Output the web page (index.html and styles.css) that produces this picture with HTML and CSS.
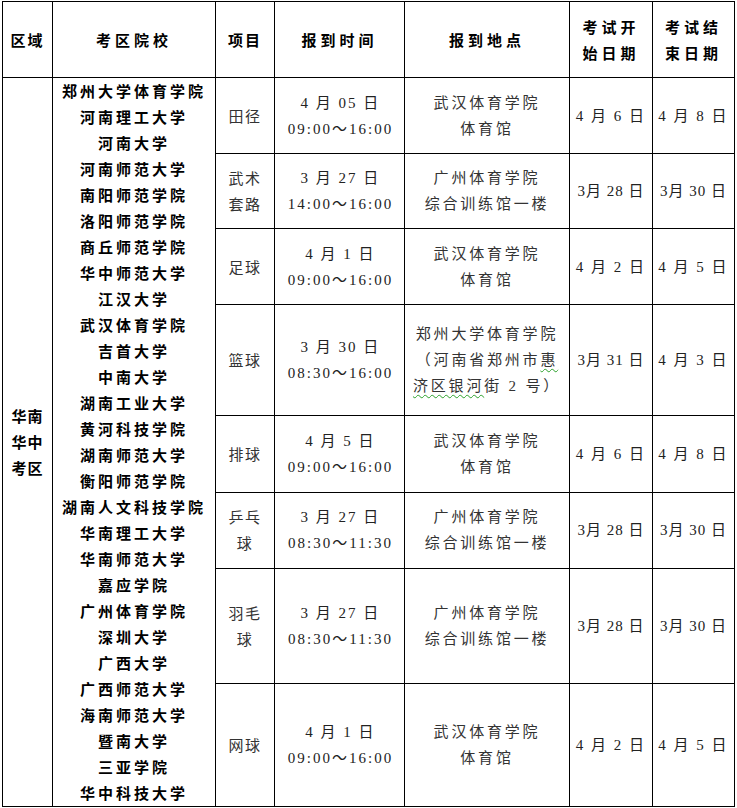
FILE: index.html
```html
<!DOCTYPE html>
<html lang="zh-CN">
<head>
<meta charset="utf-8">
<title>考区安排</title>
<link rel="stylesheet" href="styles.css">
</head>
<body>
<table class="sched">
  <colgroup>
    <col class="w-region"><col class="w-school"><col class="w-proj"><col class="w-time"><col class="w-addr"><col class="w-date"><col class="w-date2">
  </colgroup>
  <thead>
    <tr class="r-head">
      <th class="hd hd-tight">区域</th>
      <th class="hd">考区院校</th>
      <th class="hd hd-tight">项目</th>
      <th class="hd">报到时间</th>
      <th class="hd">报到地点</th>
      <th class="hd">考试开<br>始日期</th>
      <th class="hd">考试结<br>束日期</th>
    </tr>
  </thead>
  <tbody>
    <tr class="r-76">
      <td class="region" rowspan="8">华南<br>华中<br>考区</td>
      <td class="schools" rowspan="8">
        郑州大学体育学院<br>河南理工大学<br>河南大学<br>河南师范大学<br>南阳师范学院<br>洛阳师范学院<br>商丘师范学院<br>华中师范大学<br>江汉大学<br>武汉体育学院<br>吉首大学<br>中南大学<br>湖南工业大学<br>黄河科技学院<br>湖南师范大学<br>衡阳师范学院<br>湖南人文科技学院<br>华南理工大学<br>华南师范大学<br>嘉应学院<br>广州体育学院<br>深圳大学<br>广西大学<br>广西师范大学<br>海南师范大学<br>暨南大学<br>三亚学院<br>华中科技大学
      </td>
      <td class="proj">田径</td>
      <td class="time"><div class="day">4 月 05 日</div><div class="clock">09:00～16:00</div></td>
      <td class="addr">武汉体育学院<br>体育馆</td>
      <td class="date">4 月 6 日</td>
      <td class="date">4 月 8 日</td>
    </tr>
    <tr class="r-75">
      <td class="proj">武术<br>套路</td>
      <td class="time"><div class="day">3 月 27 日</div><div class="clock">14:00～16:00</div></td>
      <td class="addr">广州体育学院<br>综合训练馆一楼</td>
      <td class="date date-tight">3月 28 日</td>
      <td class="date date-tight">3月 30 日</td>
    </tr>
    <tr class="r-76">
      <td class="proj">足球</td>
      <td class="time"><div class="day">4 月 1 日</div><div class="clock">09:00～16:00</div></td>
      <td class="addr">武汉体育学院<br>体育馆</td>
      <td class="date">4 月 2 日</td>
      <td class="date">4 月 5 日</td>
    </tr>
    <tr class="r-111">
      <td class="proj">篮球</td>
      <td class="time"><div class="day">3 月 30 日</div><div class="clock">08:30～16:00</div></td>
      <td class="addr">郑州大学体育学院<br>（河南省郑州市<span class="squiggle">惠</span><br><span class="squiggle">济区银河</span>街 2 号）</td>
      <td class="date date-tight">3月 31 日</td>
      <td class="date">4 月 3 日</td>
    </tr>
    <tr class="r-76">
      <td class="proj">排球</td>
      <td class="time"><div class="day">4 月 5 日</div><div class="clock">09:00～16:00</div></td>
      <td class="addr">武汉体育学院<br>体育馆</td>
      <td class="date">4 月 6 日</td>
      <td class="date">4 月 8 日</td>
    </tr>
    <tr class="r-76">
      <td class="proj">乒乓<br>球</td>
      <td class="time"><div class="day">3 月 27 日</div><div class="clock">08:30～11:30</div></td>
      <td class="addr">广州体育学院<br>综合训练馆一楼</td>
      <td class="date date-tight">3月 28 日</td>
      <td class="date date-tight">3月 30 日</td>
    </tr>
    <tr class="r-115">
      <td class="proj">羽毛<br>球</td>
      <td class="time"><div class="day">3 月 27 日</div><div class="clock">08:30～11:30</div></td>
      <td class="addr">广州体育学院<br>综合训练馆一楼</td>
      <td class="date date-tight">3月 28 日</td>
      <td class="date date-tight">3月 30 日</td>
    </tr>
    <tr class="r-123">
      <td class="proj">网球</td>
      <td class="time"><div class="day">4 月 1 日</div><div class="clock">09:00～16:00</div></td>
      <td class="addr">武汉体育学院<br>体育馆</td>
      <td class="date">4 月 2 日</td>
      <td class="date">4 月 5 日</td>
    </tr>
  </tbody>
</table>
</body>
</html>
```

FILE: styles.css
```css
html, body {
  background: #fff;
}
body {
  margin: 1px 0 0 2px;
  font-family: "Liberation Serif", "Noto Sans CJK SC", serif;
  font-size: 15px;
  color: #222;
}
.sched {
  border-collapse: collapse;
  table-layout: fixed;
  width: 733px;
}
.sched th, .sched td {
  border: 1px solid #000;
  padding: 0;
  text-align: center;
  vertical-align: middle;
  line-height: 26px;
}
.w-region { width: 50px; }
.w-school { width: 163px; }
.w-proj { width: 59px; }
.w-time { width: 130px; }
.w-addr { width: 165px; }
.w-date { width: 83px; }
.w-date2 { width: 82px; }

.r-head { height: 76px; }
.r-75 { height: 75px; }
.r-76 { height: 76px; }
.r-111 { height: 111px; }
.r-115 { height: 115px; }
.r-123 { height: 123px; }

.hd {
  font-family: "Noto Sans CJK SC", sans-serif;
  font-weight: 700;
  color: #000;
  letter-spacing: 4px;
  padding-left: 4px;
  line-height: 25px;
}
.hd-tight {
  letter-spacing: 2px;
  padding-left: 2px;
}
.region {
  font-family: "Noto Sans CJK SC", sans-serif;
  font-weight: 700;
  color: #000;
  letter-spacing: 1px;
  padding-left: 1px;
}
.schools {
  font-family: "Noto Sans CJK SC", sans-serif;
  font-weight: 700;
  color: #000;
  letter-spacing: 3px;
  padding-left: 3px;
}
.proj {
  font-family: "Noto Sans CJK SC", sans-serif;
  color: #333;
  letter-spacing: 1.5px;
  padding-left: 1.5px;
}
.day {
  letter-spacing: 2px;
  padding-left: 2px;
}
.clock {
  letter-spacing: 2px;
  padding-left: 2px;
}
.addr {
  color: #333;
  letter-spacing: 2.8px;
  padding-left: 2.8px;
}
.date {
  letter-spacing: 2px;
  padding-left: 2px;
}
.date-tight {
  letter-spacing: 1px;
  padding-left: 1px;
}
.squiggle {
  text-decoration: underline wavy #2aa02a;
  text-decoration-thickness: 1px;
  text-underline-offset: 3px;
}
```
